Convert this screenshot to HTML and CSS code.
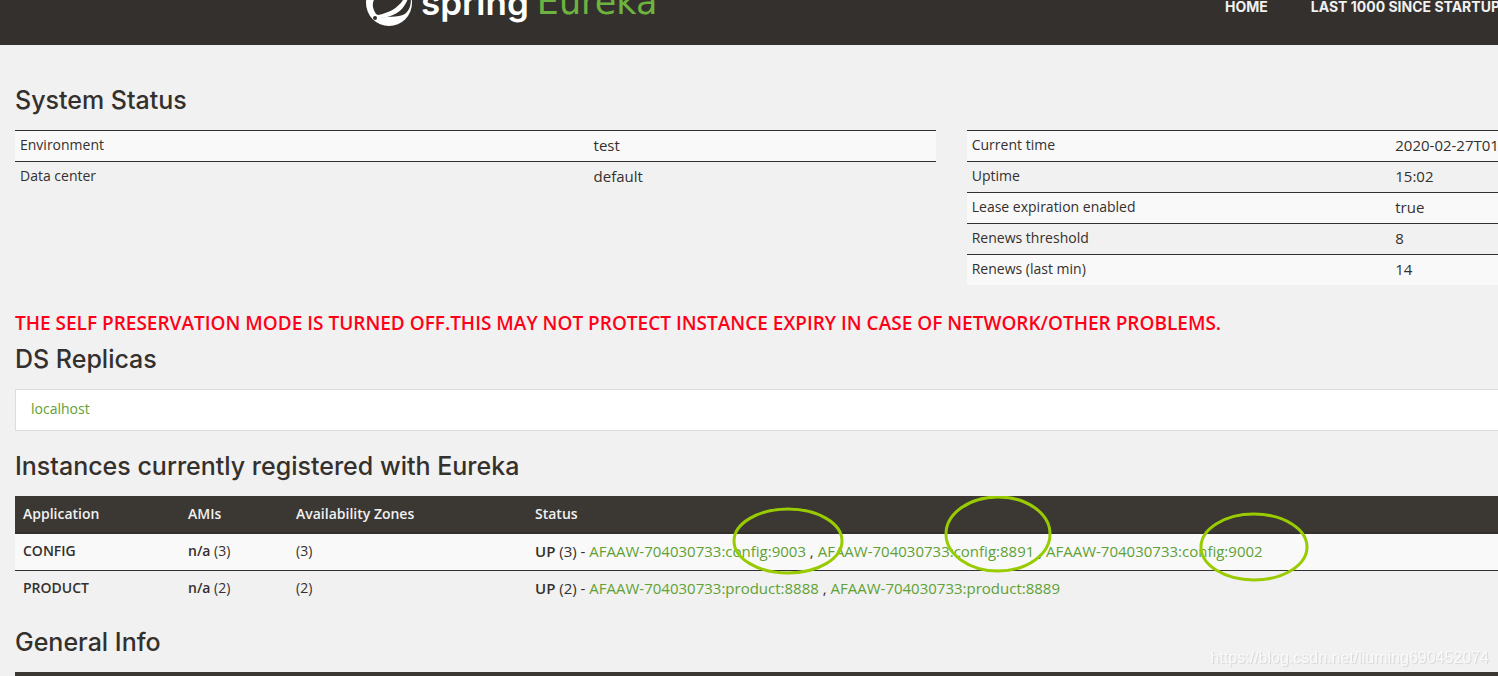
FILE: index.html
```html
<!DOCTYPE html>
<html lang="en">
<head>
    <meta charset="UTF-8">
    <meta name="viewport" content="width=device-width, initial-scale=1.0">
    <title>Eureka</title>
    <link rel="stylesheet" href="styles.css">
</head>
<body>
    <div class="page">
        <header class="navbar">
            <a class="brand" href="#">
                <svg class="brand-icon" viewBox="0 0 46 46" aria-hidden="true">
                    <circle cx="23" cy="23" r="23" fill="#fff"/>
                    <path d="M10 34 C5 27 6 19 12 16 C20 11 34 14 41 5 C42 10 41 15 37 20 C31 29 22 33 12 35 Z" fill="#34302d"/>
                    <path d="M14 38 C27 37 36 32 41 21 C43 16 43 11 42 7 C46 17 46 26 41 32 C36 38 24 36 14 38 Z" fill="#34302d"/>
                    <circle cx="9" cy="38" r="2" fill="#34302d"/>
                </svg>
                <span class="brand-spring">spring</span>
                <span class="brand-name">Eureka</span>
            </a>
            <nav class="nav">
                <a href="#">Home</a>
                <a href="#">Last 1000 since startup</a>
            </nav>
        </header>

        <main class="content">
            <h1>System Status</h1>
            <div class="row">
                <table class="table-condensed">
                    <tbody>
                        <tr><td class="env-label">Environment</td><td>test</td></tr>
                        <tr><td>Data center</td><td>default</td></tr>
                    </tbody>
                </table>
                <table class="table-condensed">
                    <tbody>
                        <tr><td class="time-label">Current time</td><td>2020-02-27T01</td></tr>
                        <tr><td>Uptime</td><td>15:02</td></tr>
                        <tr><td>Lease expiration enabled</td><td>true</td></tr>
                        <tr><td>Renews threshold</td><td>8</td></tr>
                        <tr><td>Renews (last min)</td><td>14</td></tr>
                    </tbody>
                </table>
            </div>

            <h4 class="alert">THE SELF PRESERVATION MODE IS TURNED OFF.THIS MAY NOT PROTECT INSTANCE EXPIRY IN CASE OF NETWORK/OTHER PROBLEMS.</h4>

            <h1>DS Replicas</h1>
            <ul class="list-group">
                <li><a href="#">localhost</a></li>
            </ul>

            <h1>Instances currently registered with Eureka</h1>
            <div class="instances-wrap">
                <table class="instances">
                    <thead>
                        <tr>
                            <th class="col-app">Application</th>
                            <th class="col-ami">AMIs</th>
                            <th class="col-zone">Availability Zones</th>
                            <th>Status</th>
                        </tr>
                    </thead>
                    <tbody>
                        <tr>
                            <td><b>CONFIG</b></td>
                            <td><b>n/a</b> (3)</td>
                            <td>(3)</td>
                            <td class="status"><b>UP</b> (3) - <a href="#">AFAAW-704030733:config:9003</a> , <a href="#">AFAAW-704030733:config:8891</a> , <a href="#">AFAAW-704030733:config:9002</a></td>
                        </tr>
                        <tr>
                            <td><b>PRODUCT</b></td>
                            <td><b>n/a</b> (2)</td>
                            <td>(2)</td>
                            <td class="status"><b>UP</b> (2) - <a href="#">AFAAW-704030733:product:8888</a> , <a href="#">AFAAW-704030733:product:8889</a></td>
                        </tr>
                    </tbody>
                </table>
                <svg class="marks" width="600" height="90" viewBox="0 0 600 90" aria-hidden="true">
                    <ellipse cx="58" cy="45" rx="54" ry="32"/>
                    <ellipse cx="268" cy="38" rx="52" ry="37"/>
                    <ellipse cx="524" cy="51" rx="53" ry="33"/>
                </svg>
            </div>

            <h1>General Info</h1>
            <div class="info-head"></div>
        </main>
    </div>
    <div class="watermark">https://blog.csdn.net/liuming690452074</div>
</body>
</html>
```

FILE: styles.css
```css
* {
    box-sizing: border-box;
}

body {
    margin: 0;
    background: #f1f1f1;
    color: #34302d;
    font-family: "Open Sans", "Noto Sans", sans-serif;
    font-size: 14px;
    line-height: 20px;
    overflow: hidden;
    height: 100vh;
}

a {
    color: #5fa134;
    text-decoration: none;
}

/* the dashboard is wider than the window */
.page {
    width: 127%;
}

.navbar {
    display: flex;
    align-items: flex-end;
    height: 45px;
    padding-left: 366px;
    background: #34302d;
    overflow: hidden;
}

.brand {
    display: flex;
    align-items: flex-end;
    flex: 0 0 859px;
    color: #fff;
    white-space: nowrap;
}

.brand-icon {
    width: 46px;
    height: 46px;
    margin: 0 9px 19px 0;
}

.brand-spring {
    font-family: Inter, sans-serif;
    font-size: 35px;
    font-weight: 600;
    line-height: 40px;
    margin: 0 8px 23px 0;
}

.brand-name {
    font-family: "DejaVu Sans", sans-serif;
    font-size: 35px;
    line-height: 40px;
    margin-bottom: 23px;
    color: #6db33f;
}

.nav {
    display: flex;
    gap: 43px;
    padding-bottom: 28px;
    font-family: Inter, sans-serif;
    font-weight: 700;
    white-space: nowrap;
}

.nav a {
    color: #f1f1f1;
    text-transform: uppercase;
}

.content {
    padding: 0 15px;
}

h1 {
    margin: 0;
    padding: 12px 0 17px;
    font-family: Inter, sans-serif;
    font-size: 25px;
    font-weight: 500;
    line-height: 26px;
}

.content h1:first-child {
    padding-top: 42px;
}

.row {
    display: grid;
    grid-template-columns: 1fr 1fr;
    gap: 31px;
    align-items: start;
}

table {
    width: 100%;
    border-collapse: collapse;
    table-layout: fixed;
}

td,
th {
    text-align: left;
}

tbody tr:nth-child(odd) {
    background: #f9f9f9;
}

.table-condensed td {
    padding: 4px 5px 6px;
    border-top: 1px solid #34302d;
}

.table-condensed td + td {
    font-size: 15px;
}

.env-label {
    width: 62.3%;
}

.time-label {
    width: 46%;
}

.alert {
    margin: 28px 0 1px;
    color: #ff0019;
    font-size: 19px;
    font-weight: 600;
    line-height: 20px;
}

.list-group {
    margin: 0 0 10px;
    padding: 0;
    list-style: none;
}

.list-group li {
    padding: 9px 15px 11px;
    background: #fff;
    border: 1px solid #ddd;
}

.instances-wrap {
    position: relative;
    margin-bottom: 10px;
}

.instances th {
    padding: 8px;
    background: #3b3732;
    color: #f1f1f1;
    font-weight: 600;
    border-bottom: 2px solid #34302d;
}

.instances td {
    padding: 7px 8px 9px;
}

.instances .status {
    font-size: 15px;
}

.instances tbody tr + tr td {
    border-top: 1px solid #34302d;
}

.instances b {
    font-weight: 600;
}

.col-app {
    width: 165px;
}

.col-ami {
    width: 108px;
}

.col-zone {
    width: 239px;
}

/* rings drawn over the ports */
.marks {
    position: absolute;
    top: 0;
    left: 715px;
    fill: none;
    stroke: #99cc00;
    stroke-width: 3;
    pointer-events: none;
}

.info-head {
    height: 38px;
    background: #3b3732;
}

.watermark {
    position: fixed;
    right: 9px;
    bottom: 8px;
    color: #fafafa;
    font-family: "Liberation Sans", Arial, sans-serif;
    font-size: 16px;
    text-shadow: 1px 1px 1px #d4d4d4;
}
```
